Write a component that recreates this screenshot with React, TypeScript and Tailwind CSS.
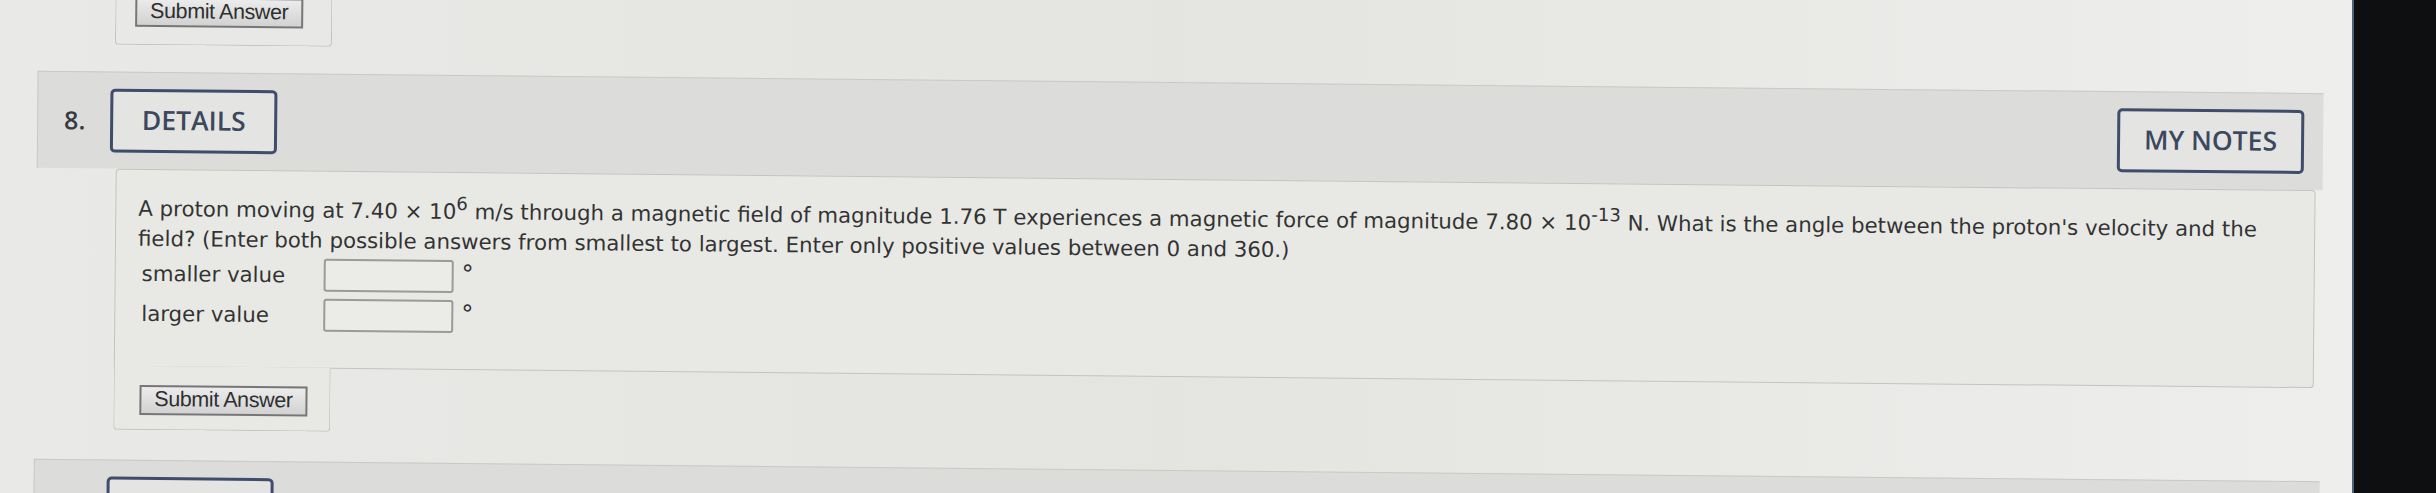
import React from 'react';

const body = { fontFamily: '"DejaVu Sans", Verdana, sans-serif' };
const sans = { fontFamily: '"Open Sans", "Noto Sans", sans-serif' };
const arial = { fontFamily: '"Liberation Sans", Arial, sans-serif' };

function SubmitButton() {
  return (
    <button
      type="button"
      style={arial}
      className="h-[30px] w-[168px] border-2 border-[#767676] bg-gradient-to-b from-[#ececec] to-[#d2d2d2] text-[21.5px] leading-none tracking-[-0.4px] text-[#2f2f2f]"
    >
      Submit Answer
    </button>
  );
}

function HeaderButton({ label, width }: { label?: string; width: string }) {
  return (
    <div
      style={sans}
      className={`flex h-[64px] ${width} items-center justify-center rounded-[5px] border-[3px] border-[#3f4d6b] bg-[#e4e5e2] text-[26.5px] font-semibold text-[#3c485e]`}
    >
      {label}
    </div>
  );
}

function AnswerRow({ label }: { label: string }) {
  return (
    <div className="flex h-[33px] items-center">
      <span className="w-[186px] pl-[4px]">{label}</span>
      <div className="h-[33px] w-[130px] rounded-[3px] border-2 border-[#9a9a98] bg-[#ebebe8]" />
      <span className="mt-[2px] ml-[8px] self-start text-[24px] leading-none">°</span>
    </div>
  );
}

function Question() {
  return (
    <div className="ml-[36px] w-[2286px]">
      <div className="flex h-[97px] items-center justify-between border-t border-l border-[#c9cac6] bg-[#dcdddA] pr-[19px] pl-[26px]">
        <div className="flex items-center gap-[25px]">
          <span style={sans} className="text-[25px] font-semibold text-[#363a41]">
            8.
          </span>
          <HeaderButton label="DETAILS" width="w-[167px]" />
        </div>
        <HeaderButton label="MY NOTES" width="w-[187px]" />
      </div>

      <div
        style={body}
        className="ml-[79px] mr-[7px] rounded-t-[4px] rounded-br-[4px] border border-[#c3c4c0] bg-[#e8e9e5] pt-[24px] pb-[36px] pl-[22px] text-[21.3px] leading-[30px] text-[#333]"
      >
        <p className="whitespace-nowrap">
          A proton moving at 7.40 × 10<sup className="text-[0.85em]">6</sup> m/s through a magnetic
          field of magnitude 1.76 T experiences a magnetic force of magnitude 7.80 × 10
          <sup className="text-[0.85em]">-13</sup> N. What is the angle between the proton's velocity
          and the
        </p>
        <p className="whitespace-nowrap">
          field? (Enter both possible answers from smallest to largest. Enter only positive values
          between 0 and 360.)
        </p>
        <div className="mt-[3px] flex flex-col gap-[7px]">
          <AnswerRow label="smaller value" />
          <AnswerRow label="larger value" />
        </div>
      </div>

      <div className="relative -mt-px ml-[79px] h-[64px] w-[217px] rounded-b-[4px] border-x border-b border-[#c3c4c0] bg-[#e8e9e5] pt-[19px] pl-[25px]">
        <SubmitButton />
      </div>
    </div>
  );
}

function NextQuestion() {
  return (
    <div className="mt-[30px] ml-[36px] w-[2286px]">
      <div className="flex h-[97px] items-start justify-between border-t border-l border-[#c9cac6] bg-[#dcdddA] pt-[16px] pr-[19px] pl-[72px]">
        <HeaderButton width="w-[167px]" />
        <HeaderButton width="w-[187px]" />
      </div>
    </div>
  );
}

export default function App() {
  return (
    <div className="flex h-[493px] w-[2436px] overflow-hidden bg-[#e5e6e2]">
      <div className="relative h-[493px] flex-1 bg-gradient-to-r from-[#e9eae7] via-[#e4e5e1] to-[#eeeeec]">
        <div className="h-[493px] w-full origin-center rotate-[0.56deg]">
          <div className="ml-[113px] h-[55px] w-[217px] rounded-b-[4px] border-x border-b border-[#c3c4c0] pt-[7px] pl-[19px]">
            <SubmitButton />
          </div>
          <div className="mt-[27px]">
            <Question />
          </div>
          <NextQuestion />
        </div>
      </div>
      <div className="relative z-10 h-[493px] w-[84px] border-l-2 border-[#4d6576] bg-[#0e0f11]" />
    </div>
  );
}
